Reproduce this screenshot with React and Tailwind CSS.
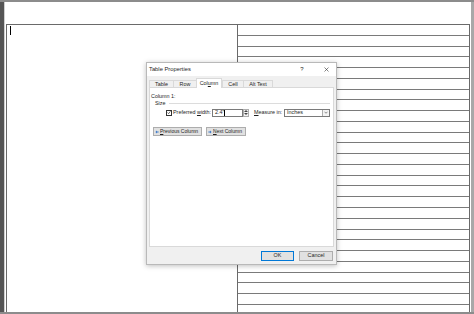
import React from 'react';

const rows = Array.from({ length: 27 }, (_, i) => i);

const Tab = ({ label, width, active, last }) => (
  <div
    className={`shrink-0 flex items-center justify-center border-t border-l border-[#d9d9d9] ${last || active ? 'border-r' : ''} ${
      active ? 'h-[10px] bg-white relative z-10 -mb-px' : 'h-[7px] bg-[#f0f0f0]'
    }`}
    style={{ width }}
  >
    {label}
  </div>
);

const Arrow = ({ dir }) => (
  <svg width="4" height="4" viewBox="0 0 10 10" className="mr-[1px] shrink-0">
    {dir === 'left' ? (
      <polygon points="1,5 5,1 5,3.5 9,3.5 9,6.5 5,6.5 5,9" fill="#3a78c9" />
    ) : (
      <polygon points="9,5 5,1 5,3.5 1,3.5 1,6.5 5,6.5 5,9" fill="#3a78c9" />
    )}
  </svg>
);

const TableDialog = () => (
  <div className="absolute left-[146px] top-[62px] w-[191px] h-[203px] bg-[#f0f0f0] border border-[#b9b9b9] shadow-[0_1px_5px_rgba(0,0,0,0.25)] flex flex-col text-[5.4px] leading-[7px] text-[#1e1e1e] whitespace-nowrap">
    {/* Title bar */}
    <div className="h-[13px] bg-white flex items-center pl-[2px]">
      <span className="text-[5.8px]">Table Properties</span>
      <span className="ml-auto w-[10px] text-center text-[6px]">?</span>
      <span className="ml-[14px] mr-[5px] w-[10px] flex justify-center">
        <svg width="5" height="5" viewBox="0 0 10 10">
          <path d="M1 1 L9 9 M9 1 L1 9" stroke="#333" strokeWidth="1.2" />
        </svg>
      </span>
    </div>

    {/* Tabs */}
    <div className="mt-[2px] h-[9px] flex items-end pl-[2px]">
      <Tab label={<span><span className="underline">T</span>able</span>} width={24} />
      <Tab label={<span><span className="underline">R</span>ow</span>} width={23} />
      <Tab label={<span>Col<span className="underline">u</span>mn</span>} width={26} active />
      <Tab label={<span>C<span className="underline">e</span>ll</span>} width={21} />
      <Tab label={<span><span className="underline">A</span>lt Text</span>} width={30} last />
    </div>

    {/* Panel */}
    <div className="mx-[2px] h-[160px] bg-white border border-[#d9d9d9]">
      <div className="mt-[5px] pl-[1px]">Column 1:</div>
      <div className="flex items-center pl-[5px]">
        <span>Size</span>
        <div className="flex-1 h-px bg-[#dcdcdc] ml-[3px] mr-[3px]" />
      </div>

      <div className="mt-[1px] h-[9px] flex items-center pl-[16px]">
        <div className="shrink-0 w-[6px] h-[6px] border border-[#333] bg-white flex items-center justify-center">
          <svg width="5" height="5" viewBox="0 0 10 10">
            <path d="M1.5 5 L4 8 L8.5 2" stroke="#222" strokeWidth="1.6" fill="none" />
          </svg>
        </div>
        <span className="shrink-0 ml-[1px] w-[39px]">
          Preferred <span className="underline">w</span>idth:
        </span>
        <div className="shrink-0 w-[31px] h-[8px] border border-[#7a7a7a] bg-white flex items-center pl-[2px]">
          <span>2.4"</span>
          <div className="w-px h-[6px] bg-black" />
        </div>
        <div className="shrink-0 w-[6px] h-[8px] border border-[#adadad] bg-[#f4f4f4] flex flex-col items-center justify-center gap-[1px]">
          <svg width="4" height="2" viewBox="0 0 8 4">
            <polygon points="0,4 4,0 8,4" fill="#444" />
          </svg>
          <svg width="4" height="2" viewBox="0 0 8 4">
            <polygon points="0,0 8,0 4,4" fill="#444" />
          </svg>
        </div>
        <span className="shrink-0 ml-[5px] w-[30px]">
          <span className="underline">M</span>easure in:
        </span>
        <div className="shrink-0 w-[46px] h-[8px] border border-[#7a7a7a] bg-white flex items-center pl-[2px]">
          <span>Inches</span>
          <div className="ml-auto w-[7px] h-full border-l border-[#adadad] bg-[#f4f4f4] flex items-center justify-center">
            <svg width="4" height="3" viewBox="0 0 8 5">
              <path d="M1 1 L4 4 L7 1" stroke="#444" strokeWidth="1.2" fill="none" />
            </svg>
          </div>
        </div>
      </div>

      <div className="mt-[10px] h-[9px] flex items-center pl-[3px] gap-[4px] text-[5px]">
        <div className="shrink-0 w-[49px] h-[9px] bg-[#e1e1e1] border border-[#adadad] flex items-center pl-[1px]">
          <Arrow dir="left" />
          <span>
            <span className="underline">P</span>revious Column
          </span>
        </div>
        <div className="shrink-0 w-[40px] h-[9px] bg-[#e1e1e1] border border-[#adadad] flex items-center pl-[1px]">
          <Arrow dir="right" />
          <span>
            <span className="underline">N</span>ext Column
          </span>
        </div>
      </div>
    </div>

    {/* Footer */}
    <div className="flex-1 flex items-center justify-end pr-[3px] gap-[5px]">
      <div className="w-[33px] h-[10px] bg-[#e1e1e1] border border-[#0078d7] flex items-center justify-center">OK</div>
      <div className="w-[34px] h-[10px] bg-[#e1e1e1] border border-[#adadad] flex items-center justify-center">Cancel</div>
    </div>
  </div>
);

export default function App() {
  return (
    <div className="relative w-[474px] h-[314px] overflow-hidden bg-white font-['Liberation_Sans',Arial,sans-serif]">
      <div className="h-[2px] bg-[#8c8c8c]" />
      <div className="flex h-[310px]">
        <div className="w-[4px] bg-[#555555]" />
        <div className="w-px bg-[#cfcfcf]" />
        <div className="w-px" />
        <div className="w-[464px] flex flex-col">
          <div className="h-[22px]" />
          <div className="flex-1 grid grid-cols-[231px_1fr] border-t border-l border-r border-[#6a6a6a] overflow-hidden">
            <div className="border-r border-[#6a6a6a]">
              <div className="ml-[3px] mt-[1px] w-px h-[9px] bg-black" />
            </div>
            <div className="flex flex-col">
              {rows.map((r) => (
                <div key={r} className="h-[10.77px] shrink-0 border-b border-[#7a7a7a]" />
              ))}
            </div>
          </div>
        </div>
        <div className="w-px" />
        <div className="w-[3px] bg-[#a8a8a8]" />
      </div>
      <div className="h-[2px] bg-[#8c8c8c]" />

      <TableDialog />
    </div>
  );
}
